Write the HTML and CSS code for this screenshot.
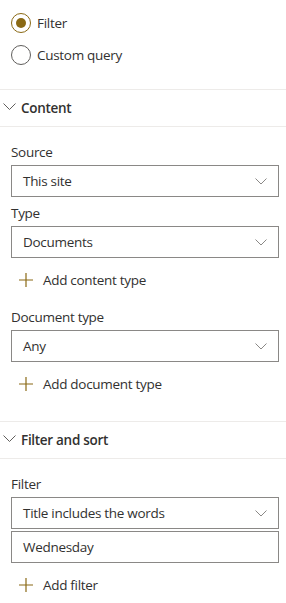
FILE: index.html
```html
<!DOCTYPE html>
<html lang="en">
<head>
    <meta charset="UTF-8">
    <meta name="viewport" content="width=device-width, initial-scale=1.0">
    <title>Highlighted content settings</title>
    <link rel="stylesheet" href="styles.css">
</head>
<body>
    <div class="panel">
        <div class="choices">
            <label class="radio checked"><span class="radio-dot"></span>Filter</label>
            <label class="radio"><span class="radio-dot"></span>Custom query</label>
        </div>

        <div class="section">
            <div class="section-head">
                <svg class="head-chevron" width="13" height="8" viewBox="0 0 13 8"><path d="M0.5 0.5 L6.5 6.5 L12.5 0.5" fill="none" stroke="#605e5c" stroke-width="1"/></svg>
                Content
            </div>
            <div class="section-body">
                <div class="field">
                    <div class="field-label">Source</div>
                    <div class="dropdown">This site
                        <svg class="drop-chevron" width="12" height="7" viewBox="0 0 12 7"><path d="M0.5 0.5 L6 6 L11.5 0.5" fill="none" stroke="#8a8886" stroke-width="1"/></svg>
                    </div>
                </div>
                <div class="field">
                    <div class="field-label">Type</div>
                    <div class="dropdown">Documents
                        <svg class="drop-chevron" width="12" height="7" viewBox="0 0 12 7"><path d="M0.5 0.5 L6 6 L11.5 0.5" fill="none" stroke="#8a8886" stroke-width="1"/></svg>
                    </div>
                </div>
                <div class="add-row">
                    <svg class="plus" width="14" height="14" viewBox="0 0 14 14"><path d="M7 0 V14 M0 7 H14" stroke="#8a6914" stroke-width="1.2"/></svg>
                    Add content type
                </div>
                <div class="field spaced">
                    <div class="field-label">Document type</div>
                    <div class="dropdown">Any
                        <svg class="drop-chevron" width="12" height="7" viewBox="0 0 12 7"><path d="M0.5 0.5 L6 6 L11.5 0.5" fill="none" stroke="#8a8886" stroke-width="1"/></svg>
                    </div>
                </div>
                <div class="add-row">
                    <svg class="plus" width="14" height="14" viewBox="0 0 14 14"><path d="M7 0 V14 M0 7 H14" stroke="#8a6914" stroke-width="1.2"/></svg>
                    Add document type
                </div>
            </div>
        </div>

        <div class="section">
            <div class="section-head">
                <svg class="head-chevron" width="13" height="8" viewBox="0 0 13 8"><path d="M0.5 0.5 L6.5 6.5 L12.5 0.5" fill="none" stroke="#605e5c" stroke-width="1"/></svg>
                Filter and sort
            </div>
            <div class="section-body">
                <div class="field">
                    <div class="field-label">Filter</div>
                    <div class="dropdown">Title includes the words
                        <svg class="drop-chevron" width="12" height="7" viewBox="0 0 12 7"><path d="M0.5 0.5 L6 6 L11.5 0.5" fill="none" stroke="#8a8886" stroke-width="1"/></svg>
                    </div>
                    <div class="text-input">Wednesday</div>
                </div>
                <div class="add-row">
                    <svg class="plus" width="14" height="14" viewBox="0 0 14 14"><path d="M7 0 V14 M0 7 H14" stroke="#8a6914" stroke-width="1.2"/></svg>
                    Add filter
                </div>
            </div>
        </div>
    </div>
</body>
</html>
```

FILE: styles.css
```css
body {
    margin: 0;
    padding: 0;
    background-color: #ffffff;
    font-family: 'Open Sans', 'Noto Sans', sans-serif;
    font-size: 13.5px;
    letter-spacing: -0.3px;
    color: #323130;
}
.panel {
    width: 286px;
}
.choices {
    display: flex;
    flex-direction: column;
    gap: 12px;
    padding: 13px 0 24px 11px;
    border-bottom: 1px solid #edebe9;
}
.radio {
    display: flex;
    align-items: center;
    gap: 6px;
    height: 20px;
    line-height: 20px;
}
.radio-dot {
    box-sizing: border-box;
    width: 20px;
    height: 20px;
    border: 1px solid #605e5c;
    border-radius: 50%;
    position: relative;
}
.radio.checked .radio-dot {
    border-color: #8a6914;
}
.radio.checked .radio-dot::after {
    content: '';
    position: absolute;
    left: 4px;
    top: 4px;
    width: 10px;
    height: 10px;
    border-radius: 50%;
    background-color: #8a6914;
}
.section {
    border-bottom: 1px solid #edebe9;
}
.section:last-child {
    border-bottom: none;
}
.section-head {
    display: flex;
    align-items: center;
    gap: 5px;
    height: 36px;
    padding-left: 3px;
    font-weight: 600;
    border-bottom: 1px solid #edebe9;
}
.head-chevron {
    margin-top: -2px;
}
.section-body {
    padding: 15px 7px 19px 11px;
}
.field-label {
    line-height: 20px;
    margin-bottom: 3px;
}
.field + .field {
    margin-top: 6px;
}
.field.spaced {
    margin-top: 9px;
}
.dropdown,
.text-input {
    box-sizing: border-box;
    display: flex;
    align-items: center;
    justify-content: space-between;
    height: 32px;
    padding: 0 11px;
    border: 1px solid #8a8886;
}
.text-input {
    margin-top: 2px;
}
.add-row {
    display: flex;
    align-items: center;
    gap: 10px;
    height: 36px;
    margin-top: 4px;
    padding-left: 8px;
}
```
